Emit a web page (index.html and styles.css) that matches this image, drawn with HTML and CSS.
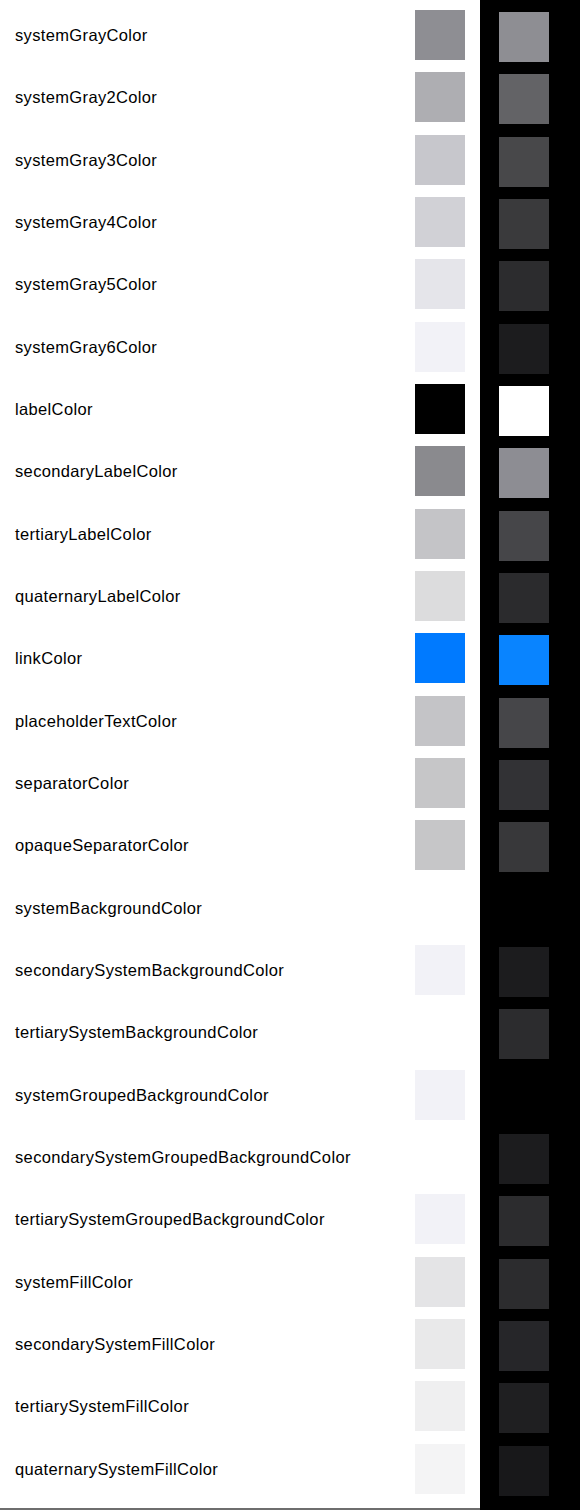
FILE: index.html
```html
<!DOCTYPE html>
<html>
<head>
<meta charset="utf-8">
<link rel="stylesheet" href="styles.css">
</head>
<body>
<div class="page">
  <div class="light">
    <div class="row"><span class="name">systemGrayColor</span><span class="sw" style="background:#8e8e93"></span></div>
    <div class="row"><span class="name">systemGray2Color</span><span class="sw" style="background:#aeaeb2"></span></div>
    <div class="row"><span class="name">systemGray3Color</span><span class="sw" style="background:#c7c7cc"></span></div>
    <div class="row"><span class="name">systemGray4Color</span><span class="sw" style="background:#d1d1d6"></span></div>
    <div class="row"><span class="name">systemGray5Color</span><span class="sw" style="background:#e5e5ea"></span></div>
    <div class="row"><span class="name">systemGray6Color</span><span class="sw" style="background:#f2f2f7"></span></div>
    <div class="row"><span class="name">labelColor</span><span class="sw" style="background:#000000"></span></div>
    <div class="row"><span class="name">secondaryLabelColor</span><span class="sw" style="background:#8a8a8e"></span></div>
    <div class="row"><span class="name">tertiaryLabelColor</span><span class="sw" style="background:#c4c4c7"></span></div>
    <div class="row"><span class="name">quaternaryLabelColor</span><span class="sw" style="background:#dcdcdd"></span></div>
    <div class="row"><span class="name">linkColor</span><span class="sw" style="background:#007aff"></span></div>
    <div class="row"><span class="name">placeholderTextColor</span><span class="sw" style="background:#c4c4c7"></span></div>
    <div class="row"><span class="name">separatorColor</span><span class="sw" style="background:#c6c6c8"></span></div>
    <div class="row"><span class="name">opaqueSeparatorColor</span><span class="sw" style="background:#c6c6c8"></span></div>
    <div class="row"><span class="name">systemBackgroundColor</span><span class="sw" style="background:#ffffff"></span></div>
    <div class="row"><span class="name">secondarySystemBackgroundColor</span><span class="sw" style="background:#f2f2f7"></span></div>
    <div class="row"><span class="name">tertiarySystemBackgroundColor</span><span class="sw" style="background:#ffffff"></span></div>
    <div class="row"><span class="name">systemGroupedBackgroundColor</span><span class="sw" style="background:#f2f2f7"></span></div>
    <div class="row"><span class="name">secondarySystemGroupedBackgroundColor</span><span class="sw" style="background:#ffffff"></span></div>
    <div class="row"><span class="name">tertiarySystemGroupedBackgroundColor</span><span class="sw" style="background:#f2f2f7"></span></div>
    <div class="row"><span class="name">systemFillColor</span><span class="sw" style="background:#e4e4e6"></span></div>
    <div class="row"><span class="name">secondarySystemFillColor</span><span class="sw" style="background:#e9e9ea"></span></div>
    <div class="row"><span class="name">tertiarySystemFillColor</span><span class="sw" style="background:#efeff0"></span></div>
    <div class="row"><span class="name">quaternarySystemFillColor</span><span class="sw" style="background:#f4f4f5"></span></div>
  </div>
  <div class="dark">
    <div class="drow"><span class="sw" style="background:#8e8e93"></span></div>
    <div class="drow"><span class="sw" style="background:#636366"></span></div>
    <div class="drow"><span class="sw" style="background:#48484a"></span></div>
    <div class="drow"><span class="sw" style="background:#3a3a3c"></span></div>
    <div class="drow"><span class="sw" style="background:#2c2c2e"></span></div>
    <div class="drow"><span class="sw" style="background:#1c1c1e"></span></div>
    <div class="drow"><span class="sw" style="background:#ffffff"></span></div>
    <div class="drow"><span class="sw" style="background:#8d8d93"></span></div>
    <div class="drow"><span class="sw" style="background:#464649"></span></div>
    <div class="drow"><span class="sw" style="background:#2b2b2d"></span></div>
    <div class="drow"><span class="sw" style="background:#0984ff"></span></div>
    <div class="drow"><span class="sw" style="background:#464649"></span></div>
    <div class="drow"><span class="sw" style="background:#323235"></span></div>
    <div class="drow"><span class="sw" style="background:#38383a"></span></div>
    <div class="drow"><span class="sw" style="background:#000000"></span></div>
    <div class="drow"><span class="sw" style="background:#1c1c1e"></span></div>
    <div class="drow"><span class="sw" style="background:#2c2c2e"></span></div>
    <div class="drow"><span class="sw" style="background:#000000"></span></div>
    <div class="drow"><span class="sw" style="background:#1c1c1e"></span></div>
    <div class="drow"><span class="sw" style="background:#2c2c2e"></span></div>
    <div class="drow"><span class="sw" style="background:#2c2c2e"></span></div>
    <div class="drow"><span class="sw" style="background:#262629"></span></div>
    <div class="drow"><span class="sw" style="background:#1f1f21"></span></div>
    <div class="drow"><span class="sw" style="background:#18181a"></span></div>
  </div>
</div>
</body>
</html>
```

FILE: styles.css
```css
html, body {
  margin: 0;
  padding: 0;
  background: #000;
}
.page {
  display: flex;
  width: 580px;
  height: 1510px;
  overflow: hidden;
}
.light {
  width: 480px;
  height: 1508px;
  background: #fff;
  border-bottom: 2px solid #6e6e6e;
  display: flex;
  flex-direction: column;
}
.dark {
  width: 100px;
  background: #000;
  display: flex;
  flex-direction: column;
}
.row {
  height: 62.333px;
  flex: none;
  display: flex;
  align-items: flex-start;
  justify-content: space-between;
  padding: 10px 15px 0 15px;
  box-sizing: border-box;
}
.name {
  font-family: "Liberation Sans", Arial, sans-serif;
  font-size: 16.5px;
  letter-spacing: 0.35px;
  color: #000;
  line-height: 50px;
}
.drow {
  height: 62.333px;
  flex: none;
  padding: 12px 0 0 19px;
  box-sizing: border-box;
}
.sw {
  display: block;
  width: 50px;
  height: 50px;
}
```
